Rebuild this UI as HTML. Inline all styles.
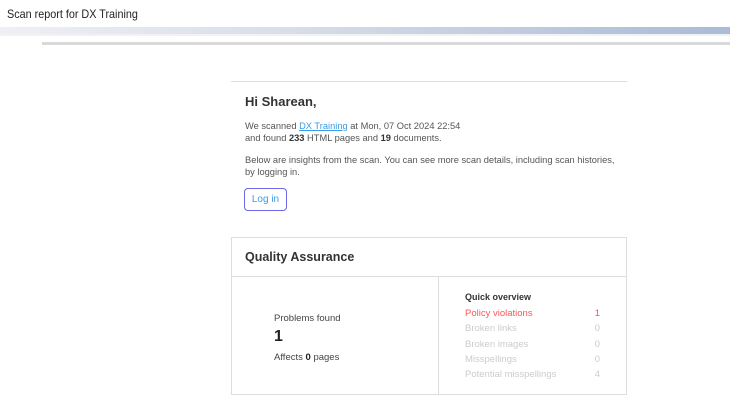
<!DOCTYPE html>
<html><head><meta charset="utf-8"><style>
*{margin:0;padding:0;box-sizing:border-box}
body{width:730px;height:404px;background:#fff;font-family:"Liberation Sans",Arial,sans-serif;position:relative;overflow:hidden;color:#555}
.a{position:absolute;white-space:nowrap}
</style></head><body>
<div class="a" style="left:0;top:0;width:730px;height:27px;background:#fff"></div>
<div class="a" style="left:7px;top:7px;font-size:12px;color:#222;transform:scaleX(0.9);transform-origin:left">Scan report for DX Training</div>
<div class="a" style="left:0;top:27px;width:730px;height:7px;background:linear-gradient(to right,#eef0f5,#d8dde8 40%,#a9bbd6);"></div>
<div class="a" style="left:0;top:34px;width:730px;height:2px;background:#f2f2f2"></div>
<div class="a" style="left:42px;top:42px;width:688px;height:3px;background:#d9d9d9"></div>

<div class="a" style="left:231px;top:81px;width:396px;height:1px;background:#ddd"></div>
<div class="a" style="left:245px;top:94px;font-size:13px;font-weight:bold;color:#333">Hi Sharean,</div>
<div class="a" style="left:245px;top:120px;font-size:9.3px;line-height:12px;color:#555">We scanned <span style="color:#3a9be6;text-decoration:underline">DX Training</span> at Mon, 07 Oct 2024 22:54<br>and found <b style="color:#333">233</b> HTML pages and <b style="color:#333">19</b> documents.</div>
<div class="a" style="left:245px;top:154px;font-size:9.3px;line-height:12px;color:#555">Below are insights from the scan. You can see more scan details, including scan histories,<br>by logging in.</div>
<div class="a" style="left:244px;top:188px;width:43px;height:23px;border:1.5px solid #6a6ae8;border-radius:4px;font-size:10px;color:#3a9be6;text-align:center;line-height:21px">Log in</div>

<div class="a" style="left:231px;top:237px;width:396px;height:158px;border:1px solid #ddd"></div>
<div class="a" style="left:231px;top:276px;width:396px;height:1px;background:#ddd"></div>
<div class="a" style="left:438px;top:276px;width:1px;height:119px;background:#ddd"></div>
<div class="a" style="left:245px;top:250px;font-size:12.5px;font-weight:bold;color:#333">Quality Assurance</div>
<div class="a" style="left:274px;top:313px;font-size:9.5px;color:#444">Problems found</div>
<div class="a" style="left:274px;top:328px;font-size:16px;font-weight:bold;color:#222">1</div>
<div class="a" style="left:274px;top:352px;font-size:9.5px;color:#444">Affects <b style="color:#222">0</b> pages</div>
<div class="a" style="left:465px;top:292px;font-size:9px;font-weight:bold;color:#333">Quick overview</div>
<div class="a" style="left:465px;top:306px;font-size:9.5px;line-height:15.3px;color:#ccc">
<span style="color:#f55">Policy violations</span><br>Broken links<br>Broken images<br>Misspellings<br>Potential misspellings</div>
<div class="a" style="left:594px;top:306px;font-size:9.5px;line-height:15.3px;color:#ccc;text-align:right;width:6px">
<span style="color:#f55">1</span><br>0<br>0<br>0<br>4</div>
</body></html>
